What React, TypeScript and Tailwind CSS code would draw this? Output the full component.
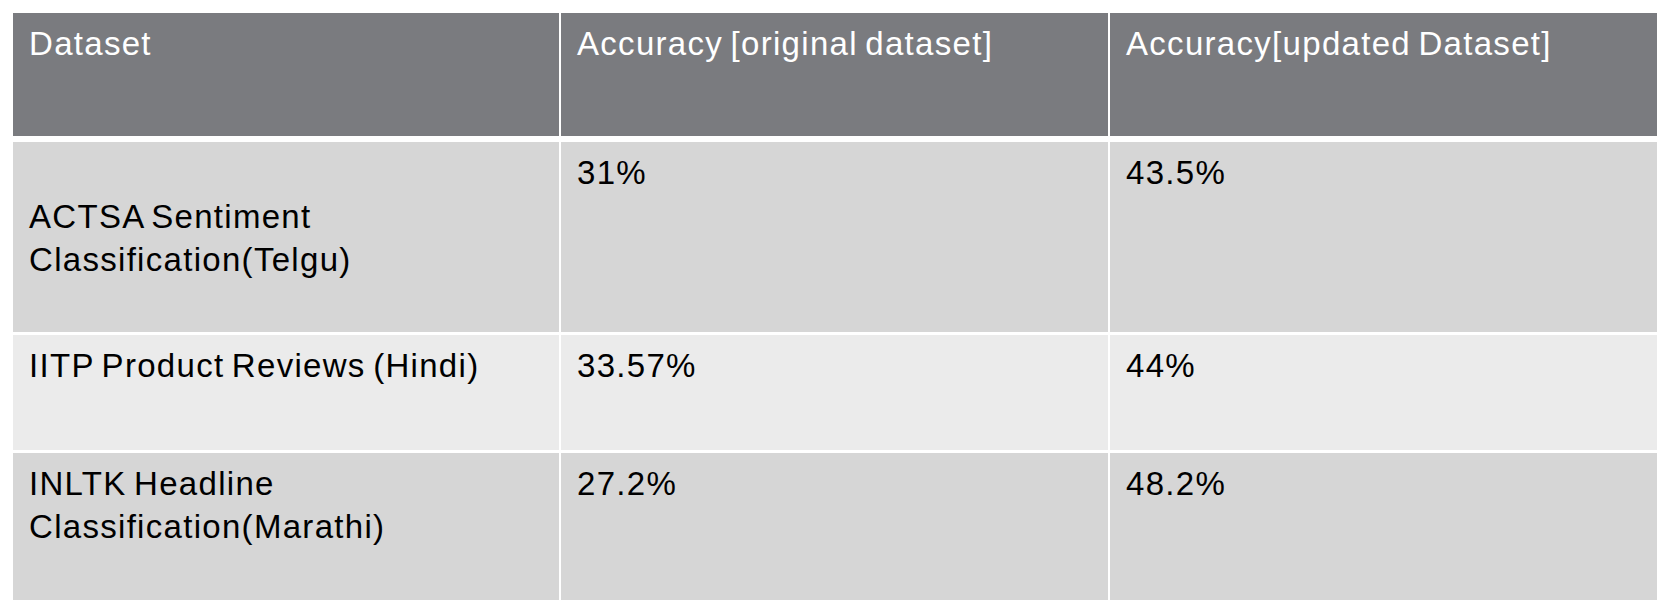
import React from 'react';

type rowProps = {
    nome: string[],
    original: string,
    updated: string,
    altura: string,
    fundo: string,
    centro?: boolean,
}

const cell = `px-4 pt-[9px] text-[33px] leading-[43px] tracking-[1.3px] [word-spacing:-3px] text-black`

const Linha = ({nome, original, updated, altura, fundo, centro}: rowProps) => {
    return (
        <div className={`grid grid-cols-[546px_547px_547px] gap-x-[2px] ${altura}`}>
            <div className={`${fundo} ${cell} ${centro ? 'flex flex-col justify-center pt-0 pb-[8px]' : ''}`}>
                {nome.map((n) => <div key={n}>{n}</div>)}
            </div>
            <div className={`${fundo} ${cell}`}>{original}</div>
            <div className={`${fundo} ${cell}`}>{updated}</div>
        </div>
    );
}

const App = () => {
    return (
        <div className="w-[1669px] h-[613px] bg-white pl-[13px] pt-[13px] font-['Liberation_Sans',Arial,sans-serif]">
            <div className="flex flex-col w-[1644px]">
                <div className="grid grid-cols-[546px_547px_547px] gap-x-[2px] h-[123px]">
                    <div className="bg-[#7a7b7f] px-4 pt-[9px] text-[33px] leading-[43px] tracking-[1.3px] [word-spacing:-3px] text-white">Dataset</div>
                    <div className="bg-[#7a7b7f] px-4 pt-[9px] text-[33px] leading-[43px] tracking-[1.3px] [word-spacing:-3px] text-white">Accuracy [original dataset]</div>
                    <div className="bg-[#7a7b7f] px-4 pt-[9px] text-[33px] leading-[43px] tracking-[1.3px] [word-spacing:-3px] text-white">Accuracy[updated Dataset]</div>
                </div>
                <div className="flex flex-col gap-y-[3px] mt-[6px]">
                    <Linha nome={['ACTSA Sentiment', 'Classification(Telgu)']} original="31%" updated="43.5%" altura="h-[190px]" fundo="bg-[#d6d6d6]" centro />
                    <Linha nome={['IITP Product Reviews (Hindi)']} original="33.57%" updated="44%" altura="h-[115px]" fundo="bg-[#ebebeb]" />
                    <Linha nome={['INLTK Headline', 'Classification(Marathi)']} original="27.2%" updated="48.2%" altura="h-[147px]" fundo="bg-[#d6d6d6]" />
                </div>
            </div>
        </div>
    );
}

export default App;
